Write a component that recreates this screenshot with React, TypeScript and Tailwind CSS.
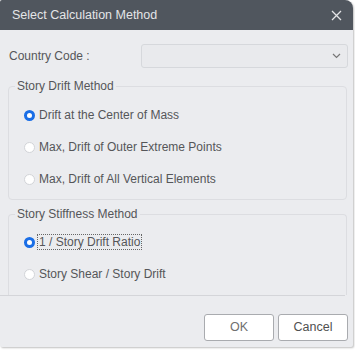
import React from "react";

function Radio({ checked }: { checked: boolean }) {
  return checked ? (
    <span className="box-border w-[11px] h-[11px] rounded-full border-[3px] border-[#1a6ee6] bg-white shrink-0" />
  ) : (
    <span className="box-border w-[11px] h-[11px] rounded-full border border-[#d2d4d8] bg-white shrink-0" />
  );
}

function Option({ label, checked, focus }: { label: string; checked?: boolean; focus?: boolean }) {
  return (
    <div className="flex items-center h-[20px] gap-[2px]">
      <Radio checked={!!checked} />
      <span className={focus ? "border border-dotted border-[#666] px-[1px] leading-[14px]" : "px-[2px] leading-[14px]"}>
        {label}
      </span>
    </div>
  );
}

export default function App() {
  return (
    <div className="w-[355px] h-[350px] bg-white" style={{ fontFamily: '"Liberation Sans", Arial, sans-serif' }}>
      <div className="w-[353px] h-[347px] bg-[#ebecef] rounded-tr-[8px] rounded-tl-[2px] rounded-b-[2px] flex flex-col overflow-hidden shadow-[1px_1px_2px_rgba(0,0,0,0.25)] text-[12px] text-[#555659]">
        <div className="h-[30px] bg-[#50565e] flex items-center justify-between pl-[12px] pr-[10px] text-[#e4e5e7] text-[12.5px]">
          <span>Select Calculation Method</span>
          <svg width="11" height="11" viewBox="0 0 11 11" className="mr-[1px]">
            <path d="M1 1 L10 10 M10 1 L1 10" stroke="#e4e5e7" strokeWidth="1.3" />
          </svg>
        </div>
        <div className="flex-1 flex flex-col">
          <div className="flex items-center h-[24px] mt-[14px] pl-[9px] pr-[5px]">
            <span className="w-[132px]">Country Code :</span>
            <div className="flex-1 h-[24px] border border-[#d6d8dc] rounded-[3px] bg-[#e9eaed] flex items-center justify-end pr-[6px]">
              <svg width="9" height="6" viewBox="0 0 9 6">
                <path d="M1 1 L4.5 4.5 L8 1" stroke="#777" strokeWidth="1.2" fill="none" />
              </svg>
            </div>
          </div>

          <div className="relative mt-[18px] mx-[8px] mr-[6px] h-[114px] border border-[#dcdde1] rounded-[4px]">
            <span className="absolute -top-[9px] left-[6px] px-[2px] bg-[#ebecef] leading-[16px]">Story Drift Method</span>
            <div className="flex flex-col gap-[12px] pt-[18px] pl-[15px]">
              <Option label="Drift at the Center of Mass" checked />
              <Option label="Max, Drift of Outer Extreme Points" />
              <Option label="Max, Drift of All Vertical Elements" />
            </div>
          </div>

          <div className="relative mt-[14px] mx-[8px] mr-[6px] h-[81px] border border-b-0 border-[#dcdde1] rounded-t-[4px]">
            <span className="absolute -top-[9px] left-[6px] px-[2px] bg-[#ebecef] leading-[16px]">Story Stiffness Method</span>
            <div className="flex flex-col gap-[12px] pt-[17px] pl-[15px]">
              <Option label="1 / Story Drift Ratio" checked focus />
              <Option label="Story Shear / Story Drift" />
            </div>
          </div>

          <div className="border-t border-[#d4d5d9] mr-[8px]" />

          <div className="flex justify-end gap-[4px] mt-[18px] pr-[5px]">
            <button className="w-[70px] h-[27px] bg-white border border-[#a9abaf] rounded-[3px] text-[#707070] text-[12.5px]">OK</button>
            <button className="w-[70px] h-[27px] bg-white border border-[#a9abaf] rounded-[3px] text-[#505050] text-[12.5px]">Cancel</button>
          </div>
        </div>
      </div>
    </div>
  );
}
